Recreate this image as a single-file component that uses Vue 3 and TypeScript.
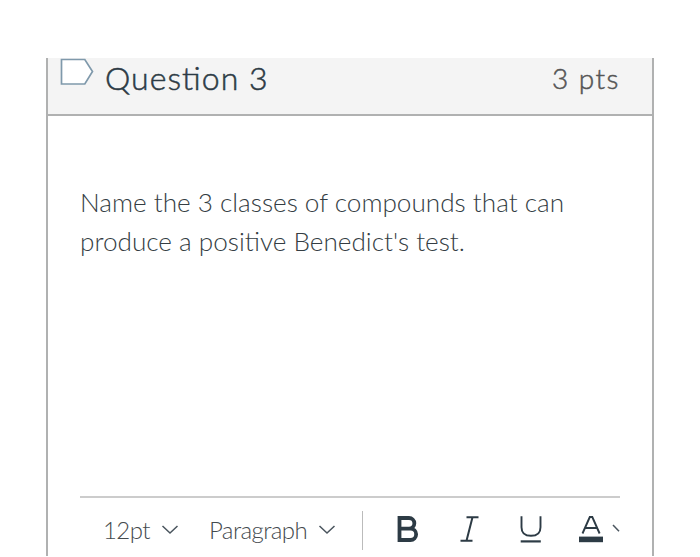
<script setup lang="ts">
const title: string = 'Question 3'
const points: string = '3 pts'
const lines: string[] = ['Name the 3 classes of compounds that can', "produce a positive Benedict's test."]
</script>

<template>
  <main class="page">
    <section class="question">
      <header class="head">
        <svg class="flag" width="36" height="30" viewBox="0 0 36 30"><path d="M1.500 1.500H24.800L32.500 13.500L24.800 26H1.500Z" fill="#fff" stroke="#7f99ab" stroke-width="1.700" /></svg>
        <h1 class="title">{{ title }}</h1>
        <span class="pts">{{ points }}</span>
      </header>
      <div class="body">
        <p class="text"><span v-for="l in lines" :key="l" class="line">{{ l }}</span></p>
        <div class="toolbar">
          <div class="select size">
            <span>12pt</span>
            <svg class="chev" width="18" height="12" viewBox="0 0 18 12"><path d="M1.500 2L9 9L16.500 2" /></svg>
          </div>
          <div class="select para">
            <span>Paragraph</span>
            <svg class="chev" width="18" height="12" viewBox="0 0 18 12"><path d="M1.500 2L9 9L16.500 2" /></svg>
          </div>
          <span class="sep"></span>
          <div class="tools">
            <svg class="tool" width="26" height="28" viewBox="0 0 26 28"><path d="M4.500 3H14A5.300 5.300 0 0 1 14 13.700H4.500ZM4.500 13.700H15.500A5.600 5.600 0 0 1 15.500 25H4.500Z" stroke-width="3.800" /></svg>
            <svg class="tool" width="26" height="28" viewBox="0 0 26 28"><path d="M9.500 2.200H21.500M3.500 25.800H15.500M15.500 2.200L9.500 25.800" stroke-width="2" /></svg>
            <svg class="tool" width="26" height="28" viewBox="0 0 26 28"><path d="M3.500 1.300V12.200Q3.500 20.800 13 20.800T22.500 12.200V1.300" stroke-width="1.900" /><path d="M2.700 26.400H22.800" stroke-width="2.200" /></svg>
            <svg class="tool" width="26" height="28" viewBox="0 0 26 28"><path d="M4.500 18.500L11.800 2H14.300L21.600 18.500M7 13H19" stroke-width="1.900" /><path d="M1 24.400H25" stroke-width="5.600" /></svg>
          </div>
          <svg class="more" width="8" height="12" viewBox="0 0 8 12"><path d="M1 2L7 8.300" /></svg>
        </div>
      </div>
    </section>
  </main>
</template>

<style scoped>
.page { box-sizing: border-box; height: 557px; padding: 58px 46px 0; font-family: Lato, sans-serif; font-weight: 300; color: #2d3b45; background: #fff; overflow: hidden; }
.question { box-sizing: border-box; height: 498px; border: solid #b0b1b1; border-width: 0 2px; overflow: hidden; }
.head { box-sizing: border-box; height: 58px; display: flex; background: #f4f4f4; border-bottom: 2px solid #b0b1b1; padding: 0 32px 0 12px; }
.title { margin: 0 0 0 9px; font-size: 32px; line-height: 39px; font-weight: 300; letter-spacing: 1.05px; font-feature-settings: "liga" 1; -webkit-text-stroke: 0.5px #2d3b45; }
.pts { margin-left: auto; font-size: 28px; line-height: 40px; letter-spacing: 1.5px; color: #555; -webkit-text-stroke: 0.5px #555; }
.body { padding: 67px 32px 0; }
.text { margin: 0; font-size: 26.15px; line-height: 39px; height: 313px; color: #343d43; }
.line { display: block; white-space: nowrap; }
.toolbar { box-sizing: border-box; display: flex; align-items: flex-start; border-top: 2px solid #ccc; height: 64px; padding-left: 23px; font-size: 24px; color: #444a4e; overflow: hidden; }
.select { box-sizing: border-box; display: flex; align-items: center; justify-content: space-between; flex: none; line-height: 32px; padding-top: 16px; letter-spacing: -0.6px; }
.size { width: 76px; }
.para { width: 127px; margin-left: 30px; }
.chev { margin-bottom: 1px; }
.chev path, .more path { fill: none; stroke: #4a555e; stroke-width: 1.5; }
.sep { flex: none; width: 1px; height: 39px; margin: 13px 32px 0 26px; background: #bbb; }
.tools { display: flex; flex: none; gap: 35.500px; padding-top: 17px; }
.tool { fill: none; stroke: #2d3b45; }
.tool:last-child { margin-left: -2px; }
.more { flex: none; margin: 25px 0 0 8px; }
</style>
